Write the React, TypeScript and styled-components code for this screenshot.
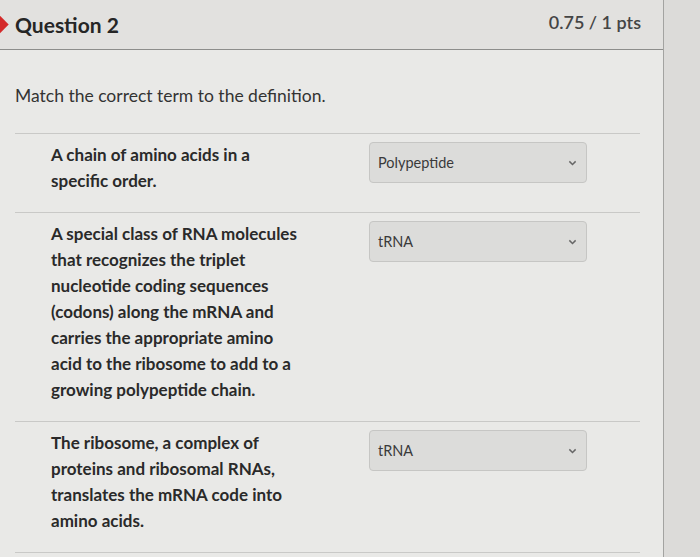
import React from 'react';
import styled, { createGlobalStyle } from 'styled-components';

type Match = {
  definition: string;
  answer: string;
};

// line breaks kept as they wrap on the page
const matches: Match[] = [
  { definition: 'A chain of amino acids in a\nspecific order.', answer: 'Polypeptide' },
  {
    definition:
      'A special class of RNA molecules\nthat recognizes the triplet\nnucleotide coding sequences\n(codons) along the mRNA and\ncarries the appropriate amino\nacid to the ribosome to add to a\ngrowing polypeptide chain.',
    answer: 'tRNA',
  },
  {
    definition:
      'The ribosome, a complex of\nproteins and ribosomal RNAs,\ntranslates the mRNA code into\namino acids.',
    answer: 'tRNA',
  },
  { definition: '', answer: '' },
];

export default function App(): JSX.Element {
  return (
    <>
      <GlobalStyle />
      <Page>
        <Panel>
          <Header>
            <Diamond />
            <Title>Question 2</Title>
            <Points>0.75 / 1 pts</Points>
          </Header>
          <Body>
            <Prompt>Match the correct term to the definition.</Prompt>
            {matches.map((m, i) => (
              <Row key={i}>
                <Definition>{m.definition}</Definition>
                <Select>
                  <SelectText>{m.answer}</SelectText>
                  <Chevron viewBox="0 0 10 6">
                    <path d="M1.5 1.2 L5 4.6 L8.5 1.2" />
                  </Chevron>
                </Select>
              </Row>
            ))}
          </Body>
        </Panel>
      </Page>
    </>
  );
}

const GlobalStyle = createGlobalStyle`
  html, body {
    margin: 0;
    padding: 0;
    overflow: hidden;
    background: #dcdbd9;
  }
  body {
    font-family: Lato, 'Liberation Sans', sans-serif;
    color: #2d2d2d;
  }
`;

const Page = styled.div`
  display: flex;
  width: 700px;
  height: 557px;
  overflow: hidden;
  background: #dcdbd9;
`;

const Panel = styled.section`
  width: 663px;
  flex: none;
  background: #e9e9e7;
  border-right: 1px solid #a3a3a1;
`;

const Header = styled.header`
  display: flex;
  align-items: center;
  height: 50px;
  padding-right: 22px;
  background: #e2e1df;
  border-bottom: 1px solid #8d8d8b;
  box-sizing: border-box;
`;

const Diamond = styled.span`
  width: 13px;
  height: 13px;
  margin-left: -7px;
  margin-right: 9px;
  background: #d42a2a;
  transform: rotate(45deg);
`;

const Title = styled.h2`
  margin: 0;
  font-size: 21px;
  font-weight: 700;
  color: #262626;
`;

const Points = styled.span`
  margin-left: auto;
  margin-top: -6px;
  font-size: 18px;
  font-weight: 600;
  color: #454545;
`;

const Body = styled.div`
  padding: 0 23px 0 15px;
`;

const Prompt = styled.p`
  margin: 0;
  padding: 35px 0 27px;
  font-size: 17.5px;
  color: #333;
`;

const Row = styled.div`
  display: grid;
  grid-template-columns: 318px 218px;
  padding: 8px 0 18px 36px;
  border-top: 1px solid #c9c9c7;
`;

const Definition = styled.p`
  margin: 0;
  white-space: pre-line;
  font-size: 17px;
  line-height: 26px;
  font-weight: 700;
  color: #2a2a2a;
`;

const Select = styled.div`
  display: flex;
  align-items: center;
  height: 41px;
  padding: 0 9px 0 8px;
  box-sizing: border-box;
  background: #dcdcda;
  border: 1px solid #c6c6c4;
  border-radius: 4px;
  align-self: start;
`;

const SelectText = styled.span`
  flex: 1;
  font-size: 14.5px;
  color: #3a3a3a;
`;

const Chevron = styled.svg`
  width: 9px;
  height: 6px;
  fill: none;
  stroke: #666;
  stroke-width: 1.6;
`;
